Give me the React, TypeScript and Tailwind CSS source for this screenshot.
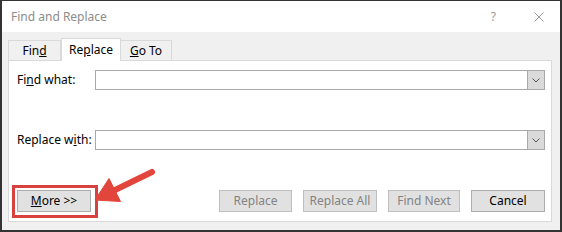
import React from "react";

const font = { fontFamily: '"Segoe UI", "Noto Sans", "Liberation Sans", sans-serif' };

function Btn({ children, disabled, w = "w-[73px]" }: { children: React.ReactNode; disabled?: boolean; w?: string }) {
  return (
    <div
      className={`${w} h-[22px] flex items-center justify-center border text-[12px] bg-[#e1e1e1] ${
        disabled ? "border-[#bfbfbf] text-[#838383]" : "border-[#adadad] text-black"
      }`}
    >
      {children}
    </div>
  );
}

function Combo() {
  return (
    <div className="flex-1 h-[20px] flex border border-[#a9a9a9] bg-white">
      <div className="flex-1" />
      <div className="w-[17px] h-full bg-[#dadada] border-l border-[#a9a9a9] flex items-center justify-center">
        <svg width="8" height="5" viewBox="0 0 8 5">
          <path d="M0.5 0.5 L4 4 L7.5 0.5" fill="none" stroke="#555" strokeWidth="1" />
        </svg>
      </div>
    </div>
  );
}

export default function App() {
  return (
    <div
      className="relative w-[562px] h-[232px] bg-[#f0f0f0] border-l-2 border-r-2 border-t border-b-2 border-[#333] flex flex-col"
      style={font}
    >
      <div className="h-[31px] bg-white flex items-center pl-[9px] pr-[16px] text-[12px]">
        <span className="text-[#8c8c8c]">Find and Replace</span>
        <span className="ml-auto text-[#9a9a9a] mr-[38px]">?</span>
        <svg width="10" height="10" viewBox="0 0 10 10">
          <path d="M0.5 0.5 L9.5 9.5 M9.5 0.5 L0.5 9.5" stroke="#9a9a9a" strokeWidth="1" />
        </svg>
      </div>
      <div className="flex-1 flex flex-col pl-[6px] pr-[8px] pt-[6px]">
        <div className="h-[22px] flex items-end text-[12px] text-black">
          <div className="h-[20px] w-[53px] border border-b-0 border-[#d9d9d9] flex items-center justify-center">
            <span>
              Fin<u>d</u>
            </span>
          </div>
          <div className="relative z-10 -mb-px h-[23px] w-[60px] border border-b-0 border-[#d9d9d9] bg-white flex items-center justify-center">
            <span>
              Re<u>p</u>lace
            </span>
          </div>
          <div className="h-[20px] w-[51px] border border-b-0 border-l-0 border-[#d9d9d9] flex items-center justify-center">
            <span>
              <u>G</u>o To
            </span>
          </div>
        </div>
        <div className="h-[162px] bg-white border border-[#d9d9d9] flex flex-col pl-[8px] pr-[6px] text-[12px] text-black">
          <div className="mt-[9px] flex items-center">
            <span className="w-[78px]">
              Fi<u>n</u>d what:
            </span>
            <Combo />
          </div>
          <div className="mt-[40px] flex items-center">
            <span className="w-[78px]">
              Replace w<u>i</u>th:
            </span>
            <Combo />
          </div>
          <div className="mt-auto mb-[9px] flex items-center">
            <Btn w="w-[74px]">
              <span>
                <u>M</u>ore &gt;&gt;
              </span>
            </Btn>
            <div className="flex-1" />
            <div className="flex gap-[11px]">
              <Btn disabled w="w-[73px]">Replace</Btn>
              <Btn disabled w="w-[74px]">Replace All</Btn>
              <Btn disabled w="w-[72px]">Find Next</Btn>
              <Btn w="w-[74px]">Cancel</Btn>
            </div>
          </div>
        </div>
      </div>
      <div className="absolute left-[10px] top-[184px] w-[86px] h-[33px] border-[3px] border-[#d9413e] pointer-events-none" />
      <svg className="absolute -left-[2px] -top-px pointer-events-none" width="562" height="232" viewBox="0 0 562 232">
        <line x1="152" y1="172" x2="114" y2="190.5" stroke="#e2453c" strokeWidth="6" strokeLinecap="round" />
        <polygon points="95,200 120.5,201.5 109,178.5" fill="#e2453c" stroke="#e2453c" strokeWidth="1" strokeLinejoin="round" />
      </svg>
    </div>
  );
}
